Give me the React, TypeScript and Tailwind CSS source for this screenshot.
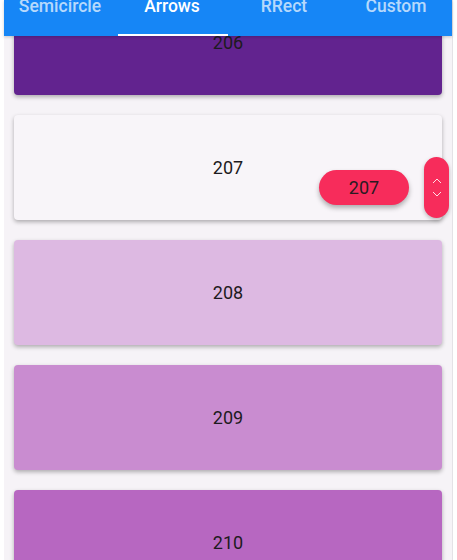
import React from "react";

const cards = [
  { n: 206, bg: "bg-[#62238f]" },
  { n: 207, bg: "bg-[#f8f5f9]" },
  { n: 208, bg: "bg-[#ddb9e2]" },
  { n: 209, bg: "bg-[#c98cd0]" },
  { n: 210, bg: "bg-[#b767c1]" },
];

const tabs = ["Semicircle", "Arrows", "RRect", "Custom"];

export default function App() {
  return (
    <div
      className="w-[457px] h-[560px] bg-white overflow-hidden flex"
      style={{ fontFamily: "Roboto, 'Liberation Sans', sans-serif" }}
    >
      <div className="ml-[4px] w-[449px] h-full bg-[#f6f3f7] flex flex-col relative border-r border-[#e4e2e6]">
        <div className="h-[36px] bg-[#1686f6] flex relative z-10 shrink-0 shadow-[0_1px_3px_rgba(0,0,0,0.2)]">
          {tabs.map((t, i) => (
            <div key={t} className="flex-1 flex flex-col items-center relative">
              <span
                className={`text-[17.5px] leading-[17.5px] mt-[-2px] font-medium ${
                  i === 1 ? "text-white" : "text-white/70"
                }`}
              >
                {t}
              </span>
              {i === 1 && (
                <div className="absolute bottom-0 left-[2px] right-[0px] h-[2.5px] bg-white" />
              )}
            </div>
          ))}
        </div>
        <div className="flex-1 overflow-hidden relative">
          <div className="flex flex-col gap-[20px] px-[10px] mt-[-46px]">
            {cards.map((c) => (
              <div
                key={c.n}
                className={`${c.bg} h-[105px] rounded-[4px] shadow-[0_2px_4px_rgba(0,0,0,0.3)] flex items-center justify-center shrink-0`}
              >
                <span className="text-[18px] text-[#1d1b20]">{c.n}</span>
              </div>
            ))}
          </div>
          <div className="absolute left-[315px] top-[134px] w-[90px] h-[35px] rounded-full bg-[#f72c5b] flex items-center justify-center shadow-[0_3px_5px_rgba(0,0,0,0.3)]">
            <span className="text-[18px] text-[#2a1a22]">207</span>
          </div>
          <div className="absolute left-[420px] top-[121px] w-[25px] h-[61px] rounded-full bg-[#f72c5b] flex flex-col items-center justify-center gap-[7px] shadow-[0_2px_4px_rgba(0,0,0,0.25)]">
            <svg width="10" height="6" viewBox="0 0 10 6" fill="none">
              <path d="M1 5 L5 1 L9 5" stroke="white" strokeOpacity="0.85" strokeWidth="1" />
            </svg>
            <svg width="10" height="6" viewBox="0 0 10 6" fill="none">
              <path d="M1 1 L5 5 L9 1" stroke="white" strokeOpacity="0.85" strokeWidth="1" />
            </svg>
          </div>
        </div>
      </div>
    </div>
  );
}
